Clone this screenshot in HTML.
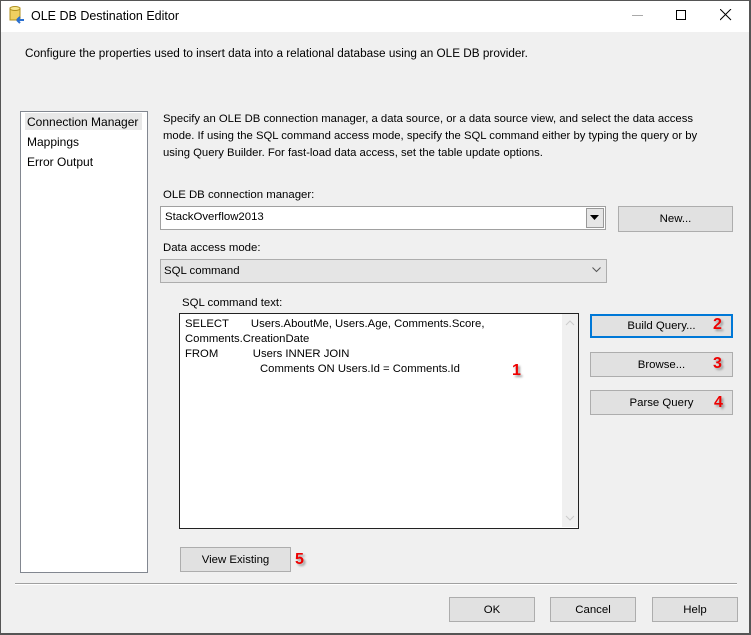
<!DOCTYPE html><html><head><style>
*{margin:0;padding:0;box-sizing:border-box}
body{width:751px;height:635px;background:#f0f0f0;font-family:"Liberation Sans",sans-serif;font-size:11.4px;color:#000;position:relative;overflow:hidden}
.a{position:absolute;white-space:nowrap}
.btn{position:absolute;background:#e1e1e1;border:1px solid #adadad;display:flex;align-items:center;justify-content:center}
.red{position:absolute;color:#e00;font-weight:bold;font-size:16px;font-family:"Liberation Sans",sans-serif;text-shadow:2px 2px 2px #999}
</style></head><body>
<div class="a" style="left:0;top:0;width:751px;height:32px;background:#fff;border:1px solid #555;border-bottom:none"></div>
<div class="a" style="left:0;top:0;width:1px;height:635px;background:#555"></div>
<div class="a" style="left:749px;top:0;width:2px;height:635px;background:#555"></div>
<div class="a" style="left:0;top:633px;width:751px;height:2px;background:#555"></div>
<svg class="a" style="left:9px;top:6px" width="16" height="18"><rect x="1" y="2" width="10" height="12" fill="#f0d060" stroke="#b09020"/><ellipse cx="6" cy="2.5" rx="5" ry="2" fill="#f8e890" stroke="#b09020"/><path d="M8 14h7M8 14l3-3M8 14l3 3" stroke="#2a6fd0" stroke-width="2" fill="none"/></svg>
<div class="a" style="left:31px;top:9px;font-size:12.5px">OLE DB Destination Editor</div>
<div class="a" style="left:632px;top:15px;width:11px;height:1px;background:#aaa"></div>
<div class="a" style="left:676px;top:10px;width:10px;height:10px;border:1px solid #000"></div>
<svg class="a" style="left:720px;top:9px" width="12" height="12"><path d="M0 0L11 11M11 0L0 11" stroke="#000"/></svg>
<div class="a" style="left:25px;top:47px;font-size:11.75px">Configure the properties used to insert data into a relational database using an OLE DB provider.</div>
<div class="a" style="left:20px;top:111px;width:128px;height:462px;background:#fff;border:1px solid #828790"></div>
<div class="a" style="left:25px;top:113px;width:117px;height:17px;background:#e8e8e8"></div>
<div class="a" style="left:27px;top:115px;font-size:12px">Connection Manager</div>
<div class="a" style="left:27px;top:135px;font-size:12px">Mappings</div>
<div class="a" style="left:27px;top:155px;font-size:12px">Error Output</div>
<div class="a" style="left:163px;top:111px;line-height:17px;font-size:11.3px">Specify an OLE DB connection manager, a data source, or a data source view, and select the data access<br>mode. If using the SQL command access mode, specify the SQL command either by typing the query or by<br>using Query Builder. For fast-load data access, set the table update options.</div>
<div class="a" style="left:163px;top:189px">OLE DB connection manager:</div>
<div class="a" style="left:160px;top:206px;width:446px;height:24px;background:#fff;border:1px solid #a0a0a0"></div>
<div class="a" style="left:165px;top:211px">StackOverflow2013</div>
<div class="a" style="left:586px;top:208px;width:18px;height:20px;background:#e6e6e6;border:1px solid #999"></div>
<svg class="a" style="left:590px;top:215px" width="10" height="6"><path d="M0 0h9L4.5 5z" fill="#000"/></svg>
<div class="btn" style="left:618px;top:206px;width:115px;height:26px">New...</div>
<div class="a" style="left:163px;top:242px">Data access mode:</div>
<div class="a" style="left:160px;top:259px;width:447px;height:24px;background:#e5e5e5;border:1px solid #adadad"></div>
<div class="a" style="left:164px;top:265px">SQL command</div>
<svg class="a" style="left:592px;top:267px" width="10" height="6"><path d="M0.5 0.5L4.5 4.5L8.5 0.5" stroke="#555" fill="none"/></svg>
<div class="a" style="left:182px;top:297px">SQL command text:</div>
<div class="a" style="left:179px;top:313px;width:400px;height:216px;background:#fff;border:1px solid #222"></div>
<div class="a" style="left:562px;top:314px;width:16px;height:213px;background:#f0f0f0"></div>
<svg class="a" style="left:565px;top:320px" width="10" height="6"><path d="M1 5L5 1L9 5" stroke="#ccc" fill="none"/></svg>
<svg class="a" style="left:565px;top:515px" width="10" height="6"><path d="M1 1L5 5L9 1" stroke="#ccc" fill="none"/></svg>
<div class="a" style="left:185px;top:317px;line-height:15px;font-size:11.3px">SELECT&nbsp;&nbsp;&nbsp;&nbsp;&nbsp;&nbsp; Users.AboutMe, Users.Age, Comments.Score,<br>Comments.CreationDate<br>FROM&nbsp;&nbsp;&nbsp;&nbsp;&nbsp;&nbsp;&nbsp;&nbsp;&nbsp;&nbsp; Users INNER JOIN<br><span style="padding-left:75px">Comments ON Users.Id = Comments.Id</span></div>
<div class="red" style="left:512px;top:362px">1</div>
<div class="btn" style="left:590px;top:314px;width:143px;height:24px;border:2px solid #0078d7">Build Query...</div>
<div class="red" style="left:713px;top:316px">2</div>
<div class="btn" style="left:590px;top:352px;width:143px;height:25px">Browse...</div>
<div class="red" style="left:713px;top:355px">3</div>
<div class="btn" style="left:590px;top:390px;width:143px;height:25px">Parse Query</div>
<div class="red" style="left:714px;top:394px">4</div>
<div class="btn" style="left:180px;top:547px;width:111px;height:25px">View Existing</div>
<div class="red" style="left:295px;top:551px">5</div>
<div class="a" style="left:15px;top:583px;width:722px;height:1px;background:#a0a0a0"></div>
<div class="a" style="left:15px;top:584px;width:722px;height:1px;background:#fff"></div>
<div class="btn" style="left:449px;top:597px;width:86px;height:25px">OK</div>
<div class="btn" style="left:550px;top:597px;width:86px;height:25px">Cancel</div>
<div class="btn" style="left:652px;top:597px;width:86px;height:25px">Help</div>
</body></html>
